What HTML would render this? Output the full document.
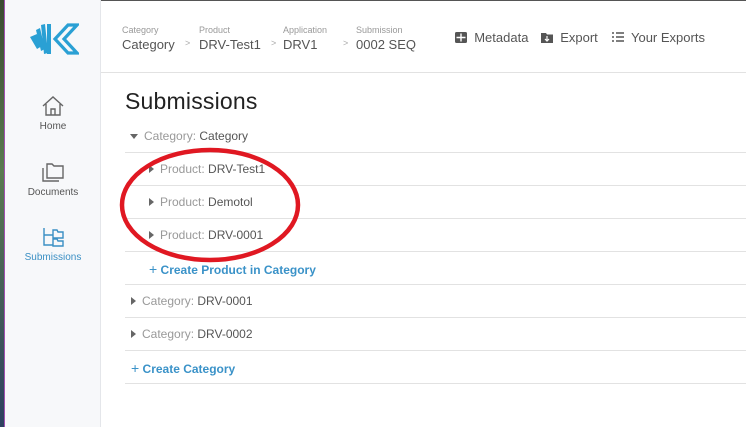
<!DOCTYPE html>
<html><head><meta charset="utf-8"><style>
*{margin:0;padding:0;box-sizing:border-box}
body{width:746px;height:427px;overflow:hidden;background:#fff;font-family:"Liberation Sans",sans-serif;position:relative}
.strip{position:absolute;left:0;top:0;width:4px;height:427px;background:linear-gradient(#3a4a30,#5a7a50 40%,#2d4060);}
.pl{position:absolute;left:4px;top:0;width:1px;height:427px;background:#a050b0}
.side{position:absolute;left:5px;top:0;width:96px;height:427px;background:#f7f8fa;border-right:1px solid #e4e6ea}
.top{position:absolute;left:0;top:0;width:746px;height:1px;background:#555}
.nav{position:absolute;left:0;width:96px;text-align:center;font-size:10px;color:#555}
.hdr{position:absolute;left:101px;top:0;right:0;height:73px;border-bottom:1px solid #e2e2e2}
.bc{position:absolute;top:25px}
.bc .s{font-size:9px;color:#999}
.bc .v{font-size:13px;color:#555;margin-top:2px}
.arr{position:absolute;top:38px;font-size:9px;color:#aaa}
.act{position:absolute;top:30px;font-size:13px;color:#555}
h1{position:absolute;left:125px;top:88px;font-size:23px;font-weight:normal;color:#222;letter-spacing:0.2px}
.row{position:absolute;left:125px;right:0;height:33px;border-bottom:1px solid #e2e2e2;font-size:12px;color:#555}
.row span.l{color:#999}
.tri{display:inline-block;width:0;height:0;border-top:4px solid transparent;border-bottom:4px solid transparent;border-left:5px solid #666;margin-right:6px}
.blue{color:#3a92c8;font-weight:bold}
</style></head><body>
<div class="top"></div>
<div class="strip"></div><div class="pl"></div>
<div class="side">
<svg style="position:absolute;left:24px;top:22px" width="50" height="33" viewBox="0 0 50 33" fill="#2aa0d4">
<path d="M1 15 L8 12 L13 24 L8 27Z"/>
<path d="M7 8 L11 6 L16 27 L12 29Z"/>
<path d="M12 3 L16 2 L19 31 L15 32Z"/>
<path d="M18 2 L22 2 L22 32 L18 32Z"/>
<path d="M26 17 L39 3 L48 3 L35 17 L48 31 L39 31Z" fill="none" stroke="#2aa0d4" stroke-width="3.2" stroke-linejoin="miter"/>
</svg>
<div class="nav" style="top:95px">
<svg width="24" height="22" viewBox="0 0 24 22" fill="none" stroke="#666" stroke-width="1.4"><path d="M2 11 L12 2 L22 11 M5 9 V20 H19 V9 M10 20 V14 H14 V20"/></svg>
<div style="margin-top:1px">Home</div></div>
<div class="nav" style="top:161px">
<svg width="26" height="22" viewBox="0 0 26 22" fill="none" stroke="#666" stroke-width="1.4"><path d="M7 3 H12 L14 5 H23 V17 H7Z M3 7 V20 H19"/></svg>
<div style="margin-top:1px">Documents</div></div>
<div class="nav" style="top:226px;color:#3a8fc4">
<svg width="26" height="22" viewBox="0 0 26 22" fill="none" stroke="#3a8fc4" stroke-width="1.4"><path d="M4 2 V19 H13 M4 9 H13 M13 4 H17 L18 6 H23 V12 H13Z M13 13 H17 L18 15 H23 V20 H13Z"/></svg>
<div style="margin-top:1px">Submissions</div></div>
</div>
<div class="hdr">
<div class="bc" style="left:21px"><div class="s">Category</div><div class="v">Category</div></div>
<div class="arr" style="left:84px">&gt;</div>
<div class="bc" style="left:98px"><div class="s">Product</div><div class="v">DRV-Test1</div></div>
<div class="arr" style="left:170px">&gt;</div>
<div class="bc" style="left:182px"><div class="s">Application</div><div class="v">DRV1</div></div>
<div class="arr" style="left:242px">&gt;</div>
<div class="bc" style="left:255px"><div class="s">Submission</div><div class="v">0002 SEQ</div></div>
<div class="act" style="left:354px"><svg width="12" height="11" style="vertical-align:-1px"><rect x="0" y="0" width="12" height="11" rx="1.5" fill="#555"/><path d="M1.5 5.5H10.5M6 1.5V9.5" stroke="#fff" stroke-width="1.4"/></svg>&nbsp; Metadata</div>
<div class="act" style="left:440px"><svg width="12" height="11" style="vertical-align:-1px"><path d="M0 1H5L6 2.5H12V11H0Z" fill="#555"/><path d="M6 4V9M4 7L6 9L8 7" stroke="#fff" stroke-width="1.2" fill="none"/></svg>&nbsp; Export</div>
<div class="act" style="left:511px"><svg width="12" height="10" style="vertical-align:0"><path d="M0 1H2M4 1H12M0 5H2M4 5H12M0 9H2M4 9H12" stroke="#555" stroke-width="1.5"/></svg>&nbsp; Your Exports</div>
</div>
<h1>Submissions</h1>
<div class="row" style="top:120px"><div style="position:absolute;left:5px;top:9px"><span style="display:inline-block;border-left:4px solid transparent;border-right:4px solid transparent;border-top:5px solid #666;margin-right:6px;vertical-align:1px"></span><span class="l">Category:</span> Category</div></div>
<div class="row" style="top:153px"><div style="position:absolute;left:24px;top:9px"><span class="tri"></span><span class="l">Product:</span> DRV-Test1</div></div>
<div class="row" style="top:186px"><div style="position:absolute;left:24px;top:9px"><span class="tri"></span><span class="l">Product:</span> Demotol</div></div>
<div class="row" style="top:219px"><div style="position:absolute;left:24px;top:9px"><span class="tri"></span><span class="l">Product:</span> DRV-0001</div></div>
<div class="row" style="top:252px"><div class="blue" style="position:absolute;left:24px;top:9px"><span style="font-size:14px;font-weight:normal">+</span> Create Product in Category</div></div>
<div class="row" style="top:285px"><div style="position:absolute;left:6px;top:9px"><span class="tri"></span><span class="l">Category:</span> DRV-0001</div></div>
<div class="row" style="top:318px"><div style="position:absolute;left:6px;top:9px"><span class="tri"></span><span class="l">Category:</span> DRV-0002</div></div>
<div class="row" style="top:351px"><div class="blue" style="position:absolute;left:6px;top:9px"><span style="font-size:14px;font-weight:normal">+</span> Create Category</div></div>
<svg style="position:absolute;left:0;top:0" width="746" height="427"><ellipse cx="210" cy="205" rx="88" ry="55" fill="none" stroke="#e01822" stroke-width="4.5"/></svg>
</body></html>
